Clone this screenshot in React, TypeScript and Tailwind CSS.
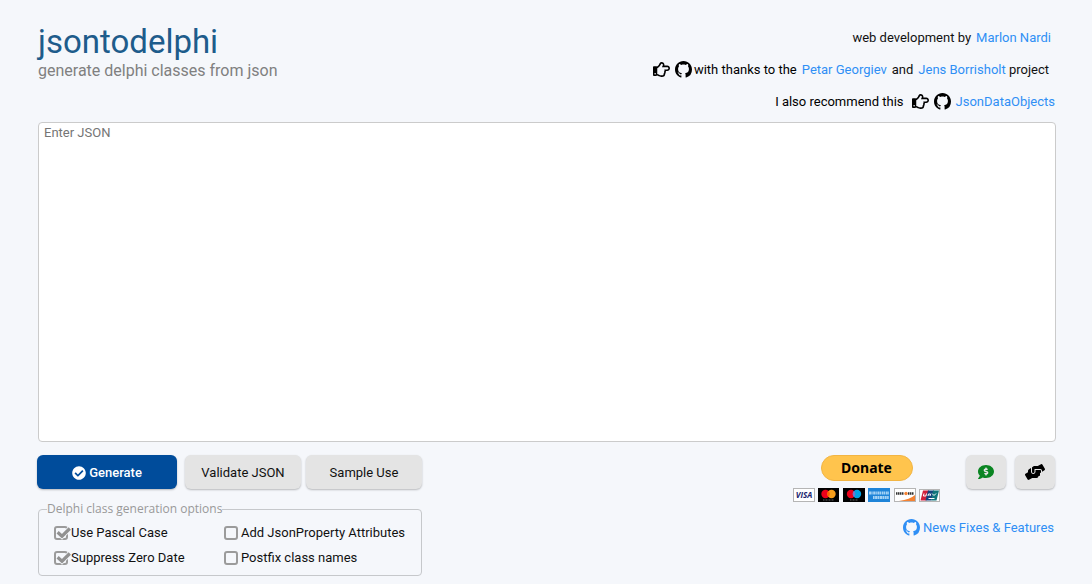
import { useState } from "react";
import type { ReactNode } from "react";
import { FaCheckCircle, FaCommentDollar, FaHandsHelping, FaRegHandPointRight } from "react-icons/fa";

const OPTIONS = [
  { id: "pascal", label: "Use Pascal Case", checked: true },
  { id: "jsonProperty", label: "Add JsonProperty Attributes", checked: false },
  { id: "zeroDate", label: "Suppress Zero Date", checked: true },
  { id: "postfix", label: "Postfix class names", checked: false },
];

function GithubMark() {
  return (
    <svg viewBox="0 0 16 16" className="mb-0.5 size-[17px] shrink-0" fill="currentColor" aria-hidden="true">
      <path d="M8 0C3.58 0 0 3.58 0 8c0 3.54 2.29 6.53 5.47 7.59.4.07.55-.17.55-.38v-1.49C4.6 13.9 3.9 13.2 3.6 12.5c-.2-.4-.4-.9-.8-1.2-.25-.15-.6-.5 0-.5.6 0 1 .55 1.2.8.7 1.1 1.5 1.1 2.05.9.07-.52.28-.87.51-1.07C4.3 11.1 2.9 10.3 2.9 7.3c0-.87.31-1.59.82-2.15-.08-.2-.36-1.3.08-2.4 0 0 .9-.1 2.3.9.6-.18 1.2-.25 1.9-.25s1.3.07 1.9.25c1.4-1 2.3-.9 2.3-.9.44 1.1.16 2.2.08 2.4.51.56.82 1.27.82 2.15 0 3-1.4 3.8-3.66 4.13.29.25.54.73.54 1.48v2.3c0 .21.15.46.55.38A8 8 0 0 0 16 8c0-4.42-3.58-8-8-8z" />
    </svg>
  );
}

function Link({ children }: { children: ReactNode }) {
  return (
    <a href="#" className="text-[#2f8ff5] hover:underline">
      {children}
    </a>
  );
}

function Option({ id, label, checked }: { id: string; label: string; checked: boolean }) {
  const [on, setOn] = useState(checked);

  return (
    <div className="flex h-5 items-center gap-[3px]">
      <span className="relative flex">
        <input
          id={id}
          type="checkbox"
          checked={on}
          onChange={(e) => setOn(e.target.checked)}
          className="size-[14px] appearance-none rounded-[3px] border-2 border-[#9b9b9b]"
        />
        {on && (
          <svg
            viewBox="0 0 18 14"
            className="pointer-events-none absolute top-0 left-0 h-[14px] w-[18px]"
          >
            <path d="M4 6.5 8 10.3 15.8 2.5" fill="none" stroke="#f5f7fb" strokeWidth="5" />
            <path d="M3.6 6.2 8 10.2 15.8 2.5" fill="none" stroke="#919191" strokeWidth="3.2" />
          </svg>
        )}
      </span>
      <label htmlFor={id} className="whitespace-nowrap">
        {label}
      </label>
    </div>
  );
}

function GreyButton({
  children,
  label,
  className,
}: {
  children: ReactNode;
  label?: string;
  className: string;
}) {
  return (
    <button
      type="button"
      aria-label={label}
      className={`flex h-[34px] items-center justify-center rounded-md bg-[#e4e4e4] shadow-[0_1px_2px_rgba(0,0,0,0.25)] hover:bg-[#dadada] ${className}`}
    >
      {children}
    </button>
  );
}

function Cards() {
  return (
    <svg viewBox="0 0 147 14" className="h-[14px] w-[147px]" fontFamily="Open Sans, sans-serif">
      {/* visa */}
      <rect x="0.5" y="0.5" width="21" height="13" fill="#fff" stroke="#b5b5b5" />
      <text x="11" y="10" fontSize="8" fontWeight="700" fontStyle="italic" textAnchor="middle" fill="#20236e">
        VISA
      </text>
      {/* mastercard */}
      <rect x="25" width="21" height="14" fill="#000" />
      <circle cx="32.5" cy="6" r="4.2" fill="#eb001b" />
      <circle cx="38.5" cy="6" r="4.2" fill="#f79e1b" />
      <path d="M35.5 3.1a4.2 4.2 0 0 1 0 5.8 4.2 4.2 0 0 1 0-5.8z" fill="#ff5f00" />
      <path d="M30 12h11" stroke="#666" strokeDasharray="1 0.5" />
      {/* maestro */}
      <rect x="50" width="22" height="14" fill="#000" />
      <circle cx="58" cy="6" r="4.2" fill="#eb001b" />
      <circle cx="64" cy="6" r="4.2" fill="#00a2e5" />
      <path d="M61 3.1a4.2 4.2 0 0 1 0 5.8 4.2 4.2 0 0 1 0-5.8z" fill="#7375cf" />
      <path d="M57 12h8" stroke="#666" strokeDasharray="1 0.5" />
      {/* amex */}
      <rect x="75" width="22" height="14" fill="#1e84d8" />
      <path d="M76 5h20" stroke="#a5d3f5" strokeWidth="3" strokeDasharray="2 0.4 1.2 0.6" />
      <path d="M80 9.5h16" stroke="#a5d3f5" strokeWidth="3" strokeDasharray="1.6 0.5 2.2 0.4" />
      {/* discover */}
      <rect x="101.5" y="0.5" width="21" height="13" fill="#fff" stroke="#b5b5b5" />
      <path d="M122 7v6h-16q11-1.5 16-6z" fill="#f58232" />
      <path d="M103 5.5h8M115 5.5h6" stroke="#333" strokeWidth="2.6" strokeDasharray="1.4 0.5" />
      <circle cx="113" cy="5.5" r="1.7" fill="#f58232" />
      {/* unionpay */}
      <rect x="126.5" y="1.5" width="20" height="12" fill="#fff" stroke="#b5b5b5" />
      <path d="M130 2.5h6l-2.5 10h-6z" fill="#d3213c" />
      <path d="M135 2.5h6l-2.5 10h-6z" fill="#16457e" />
      <path d="M140 2.5h6l-2.5 10h-5z" fill="#11767c" />
      <path
        d="M131 5.5l-.6 2.5h2.5l.6-2.5M135 8l.5-2h2l-.5 2M139 5.5l2 2 2-2M135.5 10.5h6"
        fill="none"
        stroke="#fff"
      />
    </svg>
  );
}

export default function App() {
  const [json, setJson] = useState("");

  return (
    <main className="min-h-screen bg-[#f5f7fb] pt-5 pr-9 pb-2 pl-[38px] font-['Roboto',sans-serif] text-[13px] leading-5 text-[#111]">
      <header className="flex h-[102px] items-start justify-between">
        <div className="pt-[3px]">
          <h1 className="text-[33px] leading-[38px] text-[#1e5c8b]">jsontodelphi</h1>
          <p className="text-[16px] leading-5 text-[#808080]">generate delphi classes from json</p>
        </div>

        <div className="flex flex-col items-end gap-3 pt-2">
          <p className="flex items-center gap-[5px] pr-[5px]">
            web development by <Link>Marlon Nardi</Link>
          </p>
          <p className="flex items-center gap-[5px] pr-[7px]">
            <span className="flex items-center gap-[2px] text-black">
              <FaRegHandPointRight size={17} className="mr-[3px] mb-0.5" />
              <GithubMark />
              with thanks to the
            </span>
            <Link>Petar Georgiev</Link>
            and
            <span>
              <Link>Jens Borrisholt</Link> project
            </span>
          </p>
          <p className="flex items-center gap-[5px] pr-px text-black">
            <span className="mr-[3px]">I also recommend this</span>
            <FaRegHandPointRight size={17} className="mb-0.5" />
            <GithubMark />
            <Link>JsonDataObjects</Link>
          </p>
        </div>
      </header>

      <textarea
        aria-label="JSON"
        placeholder="Enter JSON"
        value={json}
        onChange={(e) => setJson(e.target.value)}
        className="block h-80 w-full resize-none rounded-[4px] border border-[#cbcbcb] bg-white px-[5px] py-0 outline-none placeholder:text-[#757575]"
      />

      <div className="mt-[13px] flex items-start justify-between">
        <div>
          <div className="-ml-px flex gap-[5px]">
            <button
              type="button"
              className="mr-[3px] flex h-[34px] w-[140px] items-center justify-center gap-[3px] rounded-md bg-[#004c9b] pt-0.5 font-medium text-white shadow-[0_1px_2px_rgba(0,0,0,0.25)] hover:bg-[#003f82]"
            >
              <FaCheckCircle size={14} />
              Generate
            </button>
            <GreyButton className="w-[116px] pt-0.5">Validate JSON</GreyButton>
            <GreyButton className="w-[116px] pt-0.5">Sample Use</GreyButton>
          </div>

          <fieldset className="mt-3 w-96 rounded-[4px] border border-[#c6c8cb] pr-4 pb-[7px] pl-[15px]">
            <legend className="-ml-[7px] font-['Open_Sans',sans-serif] text-[12px] leading-4 text-[#999]">
              Delphi class generation options
            </legend>
            <div className="grid grid-cols-[170px_1fr] gap-y-[5px] pt-[6px]">
              {OPTIONS.map((option) => (
                <Option key={option.id} {...option} />
              ))}
            </div>
          </fieldset>
        </div>

        <div className="flex flex-col items-end gap-4">
          <div className="flex items-start gap-[9px] pr-px">
            <div className="mr-[17px] flex flex-col items-center gap-[7px]">
              <button
                type="button"
                className="h-[26px] w-[92px] rounded-full border border-[#f2b544] bg-[#ffc44d] font-['Noto_Sans',sans-serif] text-[14px] leading-none font-bold text-black"
              >
                Donate
              </button>
              <Cards />
            </div>
            <GreyButton label="Donate by message" className="w-10">
              <FaCommentDollar size={16} className="text-[#0a8522]" />
            </GreyButton>
            <GreyButton label="Partners" className="w-10">
              <FaHandsHelping size={20} className="text-black" />
            </GreyButton>
          </div>
          <a href="#" className="flex items-center gap-[3px] pr-[2px] text-[#2f8ff5]">
            <GithubMark />
            News Fixes &amp; Features
          </a>
        </div>
      </div>
    </main>
  );
}
